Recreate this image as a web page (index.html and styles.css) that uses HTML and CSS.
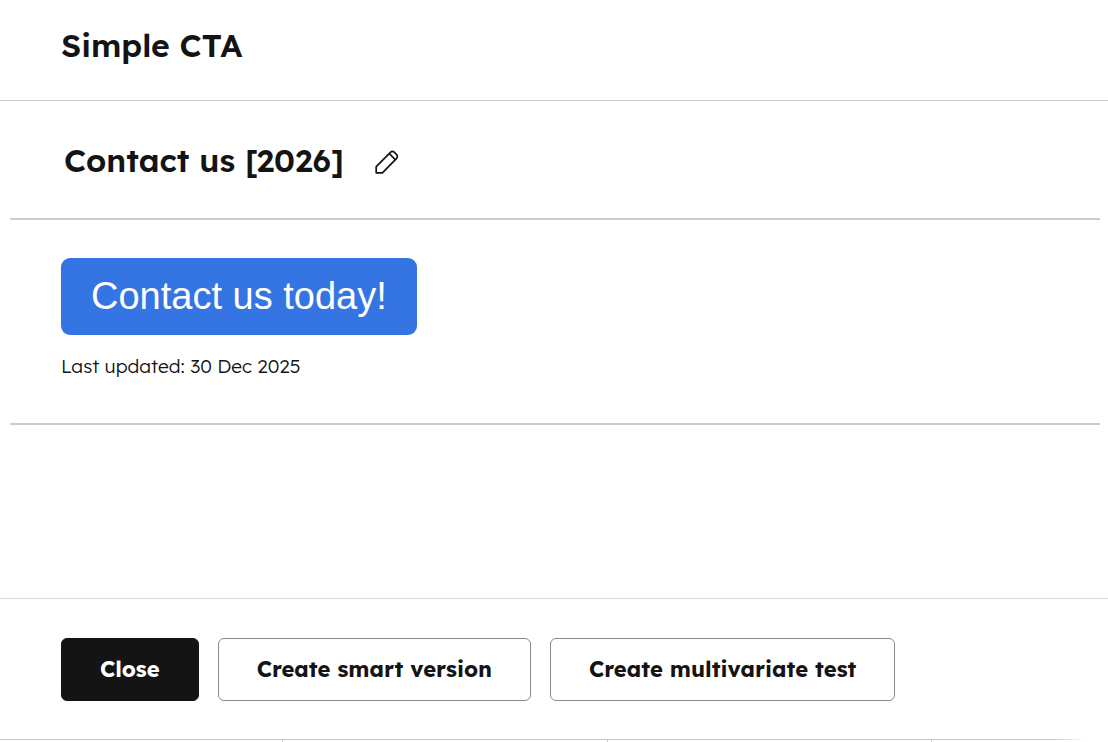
FILE: index.html
```html
<!DOCTYPE html>
<html lang="en">
<head>
    <meta charset="UTF-8">
    <meta name="viewport" content="width=device-width, initial-scale=1.0">
    <title>Simple CTA</title>
    <link rel="stylesheet" href="styles.css">
</head>
<body>
    <header class="panel-header">
        <h1 class="title">Simple CTA</h1>
    </header>

    <main class="panel-body">
        <div class="name-row">
            <h2 class="title">Contact us [2026]</h2>
            <button type="button" class="edit-btn" aria-label="Edit name">
                <svg width="24" height="24" viewBox="0 0 24 24" fill="none" stroke="currentColor" stroke-width="1.7" stroke-linejoin="round">
                    <path d="M1.2 22.8V16.6L15.4 2.4Q17.3 .6 19.2 2.2L21.6 4.6Q23.2 6.7 21.4 8.6L7.4 22.8Z"/>
                    <path d="M14.4 3.6L20.2 9.6"/>
                </svg>
            </button>
        </div>

        <div class="preview">
            <a href="#" class="cta">Contact us today!</a>
            <p class="updated">Last updated: 30 Dec 2025</p>
        </div>
    </main>

    <footer class="panel-footer">
        <button type="button" class="btn btn-primary">Close</button>
        <button type="button" class="btn">Create smart version</button>
        <button type="button" class="btn">Create multivariate test</button>
    </footer>

    <div class="table-edge">
        <span></span>
        <span></span>
        <span></span>
        <span></span>
    </div>
</body>
</html>
```
FILE: styles.css
```css
* {
    box-sizing: border-box;
}
body {
    margin: 0;
    min-height: 100vh;
    display: flex;
    flex-direction: column;
    font-family: "Lexend Deca", Lexend, Inter, sans-serif;
    color: #141414;
    background-color: #fff;
}
.panel-header {
    padding: 25px 61px 35px;
    border-bottom: 1px solid #ccc;
}
.title {
    margin: 0;
    font-size: 32px;
    line-height: 40px;
    font-weight: 600;
}
.panel-body {
    flex: 1;
    padding: 0 8px 0 10px;
}
.name-row {
    display: flex;
    align-items: flex-end;
    gap: 31px;
    padding: 39px 54px 38px;
    border-bottom: 2px solid #ccc;
}
.edit-btn {
    display: flex;
    padding: 0 0 6px;
    border: none;
    background: none;
    color: #141414;
    cursor: pointer;
}
.preview {
    padding: 38px 51px 44px;
    border-bottom: 2px solid #ccc;
}
.cta {
    display: inline-block;
    padding: 14px 30px 15px;
    border-radius: 9px;
    background-color: #3574e3;
    color: #fff;
    font-family: "Liberation Sans", Arial, sans-serif;
    font-size: 38px;
    line-height: 48px;
    text-decoration: none;
    vertical-align: top;
}
.updated {
    margin: 18px 0 0;
    font-size: 19px;
    line-height: 26px;
    font-weight: 300;
}
.panel-footer {
    display: flex;
    flex-wrap: wrap;
    gap: 19px;
    padding: 39px 61px 38px;
    border-top: 1px solid #d8d8d8;
}
.btn {
    padding: 15px 38px;
    border: 1px solid #8a8a8a;
    border-radius: 6px;
    background-color: #fff;
    color: #141414;
    font-family: inherit;
    font-size: 22px;
    line-height: 31px;
    font-weight: 700;
    cursor: pointer;
}
.btn-primary {
    border-color: #141414;
    background-color: #141414;
    color: #fff;
}
/* top edge of the table below the panel */
.table-edge {
    display: grid;
    grid-template-columns: 283fr 325fr 324fr 176fr;
    height: 3px;
    padding-top: 1px;
    background: linear-gradient(to right, #c6c6c6 95%, #fff 98%) top / 100% 1px no-repeat;
}
.table-edge span {
    border-right: 1px solid #ccc;
}
.table-edge span:last-child {
    border-right: none;
}
```
